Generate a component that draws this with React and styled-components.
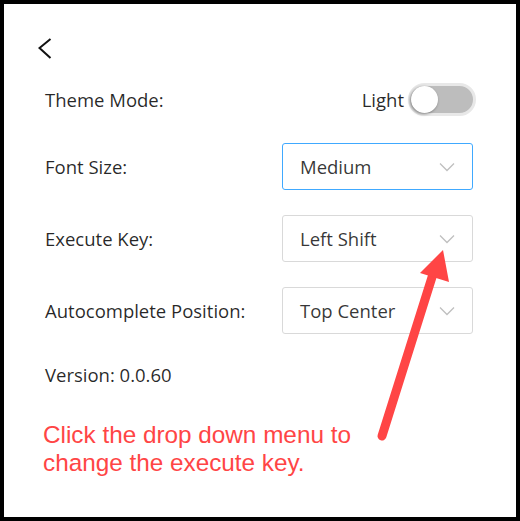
import React from "react";
import styled, { createGlobalStyle } from "styled-components";

const GlobalStyle = createGlobalStyle`
  html, body {
    margin: 0;
    padding: 0;
    background: #fff;
  }
`;

const Frame = styled.div`
  position: relative;
  box-sizing: border-box;
  width: 520px;
  height: 521px;
  border: 4px solid #000;
  padding: 34px 43px 0 41px;
  font-family: "Open Sans", "Noto Sans", sans-serif;
  color: rgba(0, 0, 0, 0.85);
`;

const BackButton = styled.button`
  display: block;
  margin-left: -7px;
  padding: 0;
  border: none;
  background: none;
  width: 14px;
  height: 21px;
  cursor: pointer;
`;

const Settings = styled.div`
  display: flex;
  flex-direction: column;
  margin-top: 24px;
`;

const Row = styled.div`
  display: flex;
  align-items: center;
  justify-content: space-between;
  height: ${(p) => p.$h || 47}px;
  margin-bottom: ${(p) => p.$gap ?? 25}px;
`;

const Label = styled.span`
  font-size: 18.5px;
  line-height: 24px;
  white-space: nowrap;
`;

const ToggleWrap = styled.div`
  display: flex;
  align-items: center;
  gap: 4px;
  margin-right: -3px;
`;

const Switch = styled.div`
  box-sizing: border-box;
  width: 68px;
  height: 33px;
  border-radius: 17px;
  border: 3px solid #e8e8e8;
  background: #bdbdbd;
  display: flex;
  align-items: center;
`;

const Knob = styled.div`
  width: 27px;
  height: 27px;
  border-radius: 50%;
  background: #fff;
  box-shadow: -1px 1px 3px rgba(0, 0, 0, 0.45);
`;

const Select = styled.div`
  box-sizing: border-box;
  width: 191px;
  height: 47px;
  border: 1px solid ${(p) => (p.$focused ? "#40a9ff" : "#d9d9d9")};
  border-radius: 3px;
  display: flex;
  align-items: center;
  justify-content: space-between;
  padding: 0 17px;
  font-size: 18.5px;
  color: rgba(0, 0, 0, 0.8);
  background: #fff;
`;

const Version = styled.div`
  font-size: 18.5px;
  line-height: 24px;
  margin-top: 29px;
`;

const Note = styled.p`
  margin: 34px 0 0 -2px;
  font-family: "Liberation Sans", Arial, sans-serif;
  font-size: 24.3px;
  line-height: 28px;
  color: #ff4545;
`;

const Arrow = styled.svg`
  position: absolute;
  left: -4px;
  top: -4px;
  pointer-events: none;
`;

const Chevron = () => (
  <svg width="16" height="10" viewBox="0 0 16 10">
    <path d="M1 1.5 L8 8.5 L15 1.5" fill="none" stroke="#bfbfbf" strokeWidth="1.3" />
  </svg>
);

const Dropdown = ({ value, focused }) => (
  <Select $focused={focused}>
    <span>{value}</span>
    <Chevron />
  </Select>
);

export default function App() {
  return (
    <>
      <GlobalStyle />
      <Frame>
        <BackButton aria-label="Back">
          <svg width="14" height="21" viewBox="0 0 14 21">
            <path d="M12.5 1 L1.5 10 L12.5 20" fill="none" stroke="#111" strokeWidth="2" />
          </svg>
        </BackButton>
        <Settings>
          <Row $h={33} $gap={27}>
            <Label>Theme Mode:</Label>
            <ToggleWrap>
              <Label>Light</Label>
              <Switch>
                <Knob />
              </Switch>
            </ToggleWrap>
          </Row>
          <Row>
            <Label>Font Size:</Label>
            <Dropdown value="Medium" focused />
          </Row>
          <Row>
            <Label>Execute Key:</Label>
            <Dropdown value="Left Shift" />
          </Row>
          <Row $gap={0}>
            <Label>Autocomplete Position:</Label>
            <Dropdown value="Top Center" />
          </Row>
          <Version>Version: 0.0.60</Version>
        </Settings>
        <Note>
          Click the drop down menu to
          <br />
          change the execute key.
        </Note>
        <Arrow width="520" height="521" viewBox="0 0 520 521">
          <line x1="382" y1="436" x2="433" y2="274" stroke="#ff4545" strokeWidth="9" strokeLinecap="round" />
          <polygon points="443,250 420,273 449,282" fill="#ff4545" />
        </Arrow>
      </Frame>
    </>
  );
}
